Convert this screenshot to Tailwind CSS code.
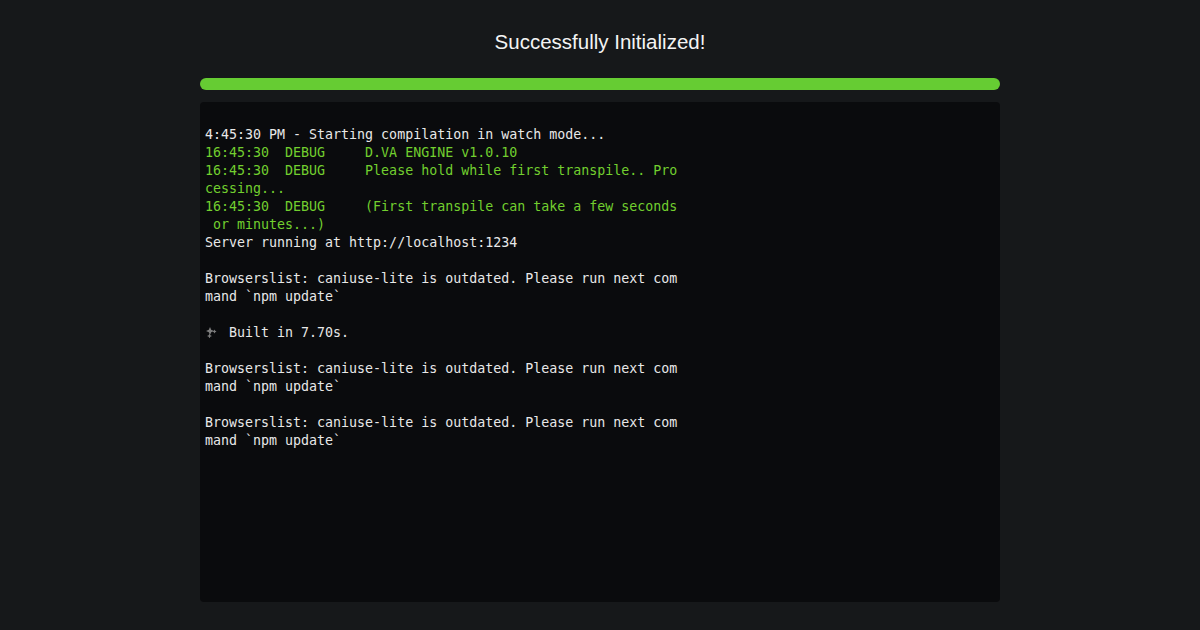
<!DOCTYPE html>
<html lang="en">
<head>
    <meta charset="UTF-8">
    <title>Initialized</title>
    <script src="https://cdn.jsdelivr.net/npm/@tailwindcss/browser@4"></script>
</head>
<body class="bg-[#16181a] w-[1200px] h-[630px] overflow-hidden">
    <div class="w-[800px] mx-auto pt-[30px]">
        <h1 class="text-center text-[#f4f4f4] text-[20.5px] leading-[24px] font-['Liberation_Sans',sans-serif]">Successfully Initialized!</h1>
        <div class="mt-6 h-3 rounded-full bg-[#66cc33]"></div>
        <div class="mt-3 h-[500px] rounded-[4px] bg-[#0a0b0d] px-[5px] pt-[6px]">
            <div class="font-['DejaVu_Sans_Mono',monospace] text-[13.3px] leading-[18px] text-[#e8e8e8] [&>div]:whitespace-pre">
                <div class="h-[18px]"></div>
                <div>4:45:30 PM - Starting compilation in watch mode...</div>
                <div class="text-[#72cf2f]">16:45:30  DEBUG     D.VA ENGINE v1.0.10</div>
                <div class="text-[#72cf2f]">16:45:30  DEBUG     Please hold while first transpile.. Pro</div>
                <div class="text-[#72cf2f]">cessing...</div>
                <div class="text-[#72cf2f]">16:45:30  DEBUG     (First transpile can take a few seconds</div>
                <div class="text-[#72cf2f]"> or minutes...)</div>
                <div>Server running at http://localhost:1234</div>
                <div class="h-[18px]"></div>
                <div>Browserslist: caniuse-lite is outdated. Please run next com</div>
                <div>mand `npm update`</div>
                <div class="h-[18px]"></div>
                <div class="flex"><span class="w-6 pt-[2px]"><svg width="12" height="12" viewBox="0 0 12 12" fill="#7d7d7d"><path d="M5 1l1.2 2.8L9 5 6.2 6.2 5 9 3.8 6.2 1 5l2.8-1.2z"/><path d="M9.5 3.5l.7 1.3 1.3.7-1.3.7-.7 1.3-.7-1.3-1.3-.7 1.3-.7z"/><path d="M4.5 7.5l.8 1.7 1.7.8-1.7.8-.8 1.7-.8-1.7L2 10l1.7-.8z"/></svg></span><span>Built in 7.70s.</span></div>
                <div class="h-[18px]"></div>
                <div>Browserslist: caniuse-lite is outdated. Please run next com</div>
                <div>mand `npm update`</div>
                <div class="h-[18px]"></div>
                <div>Browserslist: caniuse-lite is outdated. Please run next com</div>
                <div>mand `npm update`</div>
            </div>
        </div>
    </div>
</body>
</html>
